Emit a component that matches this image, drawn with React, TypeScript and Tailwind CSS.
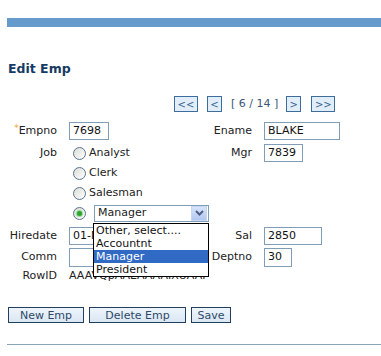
import React from "react"

const font = "font-['DejaVu_Sans','Liberation_Sans',sans-serif]"

function Field({ w, h = 18, value = "" }: { w: number; h?: number; value?: string }) {
  return (
    <div
      className="border border-[#7f9db9] bg-white px-[3px] flex items-center text-[#111] overflow-hidden whitespace-nowrap"
      style={{ width: w, height: h }}
    >
      {value}
    </div>
  )
}

function Radio({ checked = false }: { checked?: boolean }) {
  return (
    <span className="w-[13px] h-[13px] rounded-full border border-[#5a7590] bg-gradient-to-br from-[#dcdcd6] to-white flex items-center justify-center shrink-0">
      {checked && <span className="w-[5px] h-[5px] rounded-full bg-[#2fa52f] shadow-[0_0_1px_1px_#8fd88f]" />}
    </span>
  )
}

function PageBtn({ label, w }: { label: string; w: number }) {
  return (
    <span
      className="h-[16px] border border-[#3d6d9c] bg-[#e1edf9] text-[#3b6690] text-[10px] flex items-center justify-center"
      style={{ width: w }}
    >
      {label}
    </span>
  )
}

function ActionBtn({ label, w }: { label: string; w: number }) {
  return (
    <button
      className="h-[16px] border border-[#22405e] bg-gradient-to-b from-[#eef4fb] to-[#dbe7f4] text-[#2c4a68] text-[11px] leading-none flex items-center justify-center"
      style={{ width: w }}
    >
      {label}
    </button>
  )
}

const jobs = ["Analyst", "Clerk", "Salesman"]
const options = ["Other, select....", "Accountnt", "Manager", "President"]

export default function App() {
  return (
    <div className={`relative w-[381px] h-[356px] bg-white overflow-hidden text-[11px] text-[#222] ${font}`}>
      <div className="h-[18px]" />
      <div className="ml-[7px] h-[9px] bg-[#6699cc]" />

      <h1 className="mt-[34px] ml-[8px] text-[12.5px] leading-[15px] font-bold text-[#173a63]">Edit Emp</h1>

      {/* pager */}
      <div className="mt-[20px] ml-[174px] flex items-center h-[16px]">
        <PageBtn label="<<" w={24} />
        <span className="ml-[9px]"><PageBtn label="<" w={15} /></span>
        <span className="ml-[9px] text-[#3a5877]">[ 6 / 14 ]</span>
        <span className="ml-[8px]"><PageBtn label=">" w={15} /></span>
        <span className="ml-[10px]"><PageBtn label=">>" w={24} /></span>
      </div>

      {/* form */}
      <div className="mt-[9px] flex flex-col">
        <div className="flex items-center h-[20px]">
          <div className="w-[57px] text-right">
            <span className="text-[#f0a030] text-[9px] relative -top-[3px]">*</span>Empno
          </div>
          <div className="w-[140px] pl-[12px]"><Field w={40} value="7698" /></div>
          <div className="w-[55px] text-right">Ename</div>
          <div className="pl-[12px]"><Field w={76} value="BLAKE" /></div>
        </div>

        <div className="mt-[2px] flex items-start">
          <div className="w-[57px] text-right h-[20px] leading-[20px]">Job</div>
          <div className="w-[140px] pl-[12px] flex flex-col">
            {jobs.map((j) => (
              <div key={j} className="h-[20px] flex items-center pl-[4px] gap-[3px]">
                <Radio />
                <span>{j}</span>
              </div>
            ))}
            <div className="h-[20px] flex items-center pl-[4px]">
              <Radio checked />
              <div className="relative ml-[8px]">
                <div className="w-[115px] h-[17px] border border-[#7f9db9] bg-white flex items-center">
                  <span className="pl-[3px] flex-1">Manager</span>
                  <span className="w-[16px] h-[15px] mr-px bg-gradient-to-b from-[#d6e3fb] to-[#b3c8f0] border border-[#c6d6f5] flex items-center justify-center">
                    <svg width="9" height="6" viewBox="0 0 9 6">
                      <path d="M1 1l3.5 3.5L8 1" fill="none" stroke="#4d6185" strokeWidth="2" />
                    </svg>
                  </span>
                </div>
                <div className="absolute left-[-1px] top-[18px] z-10 w-[116px] border border-black bg-white">
                  {options.map((o) => (
                    <div
                      key={o}
                      className={`h-[13px] leading-[13px] pl-[2px] whitespace-nowrap ${
                        o === "Manager" ? "bg-[#316ac5] text-white" : "text-[#111]"
                      }`}
                    >
                      {o}
                    </div>
                  ))}
                </div>
              </div>
            </div>
          </div>
          <div className="w-[55px] text-right h-[20px] leading-[20px]">Mgr</div>
          <div className="pl-[12px] pt-px"><Field w={39} value="7839" /></div>
        </div>

        <div className="mt-[2px] flex items-center h-[22px]">
          <div className="w-[57px] text-right">Hiredate</div>
          <div className="w-[140px] pl-[12px]"><Field w={71} value="01-MAY-81" /></div>
          <div className="w-[55px] text-right">Sal</div>
          <div className="pl-[12px]"><Field w={58} value="2850" /></div>
        </div>

        <div className="flex items-center h-[21px]">
          <div className="w-[57px] text-right">Comm</div>
          <div className="w-[140px] pl-[12px]"><Field w={71} h={19} /></div>
          <div className="w-[55px] text-right">Deptno</div>
          <div className="pl-[12px]"><Field w={28} h={19} value="30" /></div>
        </div>

        <div className="flex items-center h-[16px]">
          <div className="w-[57px] text-right">RowID</div>
          <div className="pl-[12px]">AAAVQpAAEAAAAIXUAAF</div>
        </div>
      </div>

      <div className="mt-[23px] ml-[8px] flex gap-[5px]">
        <ActionBtn label="New Emp" w={76} />
        <ActionBtn label="Delete Emp" w={97} />
        <ActionBtn label="Save" w={40} />
      </div>

      <div className="mt-[21px] ml-[7px] h-px bg-[#89a3b5]" />
    </div>
  )
}
